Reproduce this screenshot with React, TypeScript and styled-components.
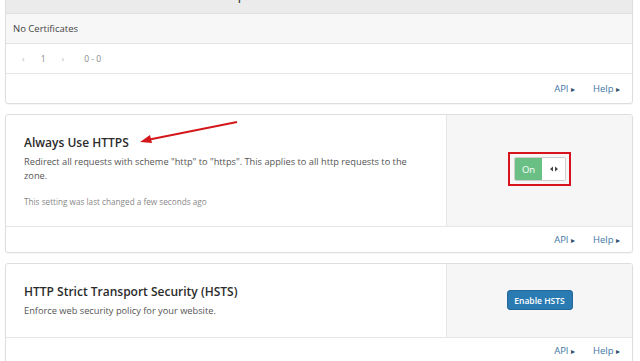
import { FC } from "react";
import styled, { createGlobalStyle } from "styled-components";

const GlobalStyle = createGlobalStyle`
    html, body {
        margin: 0;
        padding: 0;
        background: #fff;
        font-family: "Open Sans", "Liberation Sans", sans-serif;
        color: #333;
        overflow: hidden;
    }
`

const Grip: FC = () => (
    <svg width="8" height="6" viewBox="0 0 8 6">
        <polygon points="0,3 3,0.5 3,5.5" fill="#444" />
        <polygon points="8,3 5,0.5 5,5.5" fill="#444" />
    </svg>
)

const Links: FC<{height: number}> = ({height}) => (
    <CardFooter $height={height}>
        <FooterLink>API <Caret>▸</Caret></FooterLink>
        <FooterLink>Help <Caret>▸</Caret></FooterLink>
    </CardFooter>
)

const App: FC = () => {
    return (
        <>
            <GlobalStyle />
            <Page>
                <Card>
                    <TableHead>
                        <HeadCell $width={214}>Hosts</HeadCell>
                        <HeadCell>Expires On</HeadCell>
                    </TableHead>
                    <EmptyRow>No Certificates</EmptyRow>
                    <Pager>
                        <PagerArrow>‹</PagerArrow>
                        <PagerNum>1</PagerNum>
                        <PagerArrow>›</PagerArrow>
                        <PagerRange>0 - 0</PagerRange>
                    </Pager>
                    <Links height={29} />
                </Card>

                <Card>
                    <SettingBody $height={111}>
                        <SettingText>
                            <Title>Always Use HTTPS</Title>
                            <Description>
                                Redirect all requests with scheme "http" to "https". This applies to all http requests to the zone.
                            </Description>
                            <Changed>This setting was last changed a few seconds ago</Changed>
                            <Annotation width="110" height="30" viewBox="0 0 110 30">
                                <line x1="100" y1="4" x2="10" y2="22" stroke="#d3181c" strokeWidth="2" />
                                <polygon points="3,24 13,17 15,25" fill="#d3181c" />
                            </Annotation>
                        </SettingText>
                        <SettingControl $top={37}>
                            <Highlight>
                                <Toggle>
                                    <ToggleOn>On</ToggleOn>
                                    <ToggleKnob><Grip /></ToggleKnob>
                                </Toggle>
                            </Highlight>
                        </SettingControl>
                    </SettingBody>
                    <Links height={25} />
                </Card>

                <Card>
                    <SettingBody $height={73}>
                        <SettingText>
                            <Title>HTTP Strict Transport Security (HSTS)</Title>
                            <Description>Enforce web security policy for your website.</Description>
                        </SettingText>
                        <SettingControl $top={26}>
                            <BlueButton>Enable HSTS</BlueButton>
                        </SettingControl>
                    </SettingBody>
                    <Links height={25} />
                </Card>
            </Page>
        </>
    )
}

export default App


const Page = styled.div`
    margin-top: -17px;
    padding: 0 7px 0 5px;
    display: flex;
    flex-direction: column;
    gap: 10px;
`

const Card = styled.div`
    border: 1px solid #dedede;
    border-radius: 3px;
    background: #fff;
    overflow: hidden;
    box-shadow: 0 1px 1px rgba(0,0,0,0.04);
`

const TableHead = styled.div`
    display: flex;
    height: 30px;
    align-items: flex-start;
    padding: 5px 7px 0;
    box-sizing: border-box;
    background: #ebebeb;
    border-bottom: 1px solid #e0e0e0;
    font-size: 10px;
    font-weight: 600;
    color: #333;
`

const HeadCell = styled.div<{$width?: number}>`
    width: ${props => props.$width ? `${props.$width}px` : "auto"};
`

const EmptyRow = styled.div`
    height: 29px;
    display: flex;
    align-items: center;
    padding: 0 7px;
    background: #f7f7f7;
    border-bottom: 1px solid #e3e3e3;
    font-size: 9.5px;
    color: #444;
`

const Pager = styled.div`
    height: 29px;
    display: flex;
    align-items: center;
    padding-left: 16px;
    font-size: 8.5px;
    color: #888;
`

const PagerArrow = styled.span`
    color: #bbb;
    font-size: 9px;
    margin-right: 16px;
`

const PagerNum = styled.span`
    margin-right: 16px;
`

const PagerRange = styled.span`
    margin-left: 4px;
`

const CardFooter = styled.div<{$height: number}>`
    height: ${props => props.$height}px;
    display: flex;
    align-items: center;
    justify-content: flex-end;
    gap: 18px;
    padding-right: 12px;
    border-top: 1px solid #e6e6e6;
`

const FooterLink = styled.a`
    font-size: 9.5px;
    color: #3f77a6;
    cursor: pointer;
`

const Caret = styled.span`
    font-size: 8px;
    color: #2f4f6d;
`

const SettingBody = styled.div<{$height: number}>`
    height: ${props => props.$height}px;
    display: flex;
`

const SettingText = styled.div`
    position: relative;
    flex: 1;
    padding: 19px 18px 0;
`

const Title = styled.h3`
    margin: 0;
    font-size: 12px;
    font-weight: 600;
    color: #2b2b2b;
    line-height: 18px;
`

const Description = styled.p`
    margin: 3px 0 0;
    font-size: 9.25px;
    line-height: 14px;
    color: #555;
    max-width: 400px;
`

const Changed = styled.p`
    margin: 13px 0 0;
    font-size: 8.2px;
    line-height: 11px;
    color: #888;
`

const Annotation = styled.svg`
    position: absolute;
    left: 131px;
    top: 3px;
    overflow: visible;
`

const SettingControl = styled.div<{$top: number}>`
    width: 186px;
    background: #f6f6f6;
    border-left: 1px solid #e6e6e6;
    display: flex;
    justify-content: center;
    align-items: flex-start;
    padding-top: ${props => props.$top}px;
    box-sizing: border-box;
`

const Highlight = styled.div`
    border: 2px solid #d7141c;
    padding: 3px 3px 3px 4px;
`

const Toggle = styled.div`
    display: flex;
    width: 52px;
    height: 24px;
    border-radius: 2px;
    overflow: hidden;
    border: 1px solid #cfcfcf;
    box-sizing: border-box;
`

const ToggleOn = styled.div`
    width: 27px;
    background: #6abf85;
    color: #fff;
    font-size: 9.5px;
    display: flex;
    align-items: center;
    justify-content: center;
`

const ToggleKnob = styled.div`
    flex: 1;
    background: #fff;
    display: flex;
    align-items: center;
    justify-content: center;
`

const BlueButton = styled.button`
    width: 66px;
    height: 20px;
    border: 1px solid #22689a;
    border-radius: 3px;
    background: #2b7bb3;
    color: #fff;
    font-family: "Open Sans", "Liberation Sans", sans-serif;
    font-size: 8.5px;
    font-weight: 600;
    padding: 0;
    cursor: pointer;
`
